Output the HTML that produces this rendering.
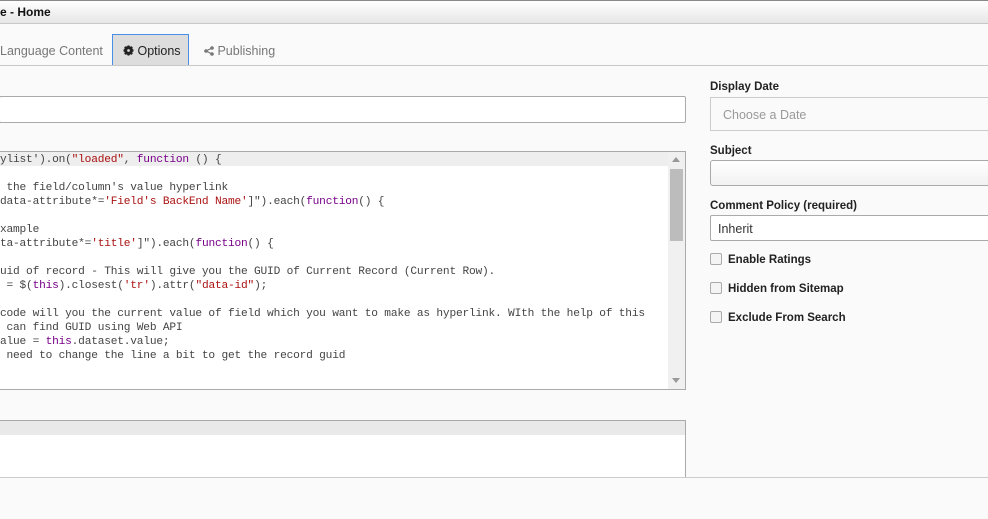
<!DOCTYPE html>
<html><head><meta charset="utf-8"><style>
*{box-sizing:border-box;margin:0;padding:0}
body{width:988px;height:519px;overflow:hidden;background:#fafafa;font-family:"Liberation Sans",sans-serif;position:relative}
.abs{position:absolute}
.title{left:0;top:0;width:988px;height:24px;background:linear-gradient(#fff,#e6e6e6);border-top:1px solid #888;border-bottom:1px solid #c8c8c8;font-weight:bold;font-size:12px;line-height:22px;color:#111}
.tab{font-size:12.5px;color:#777;top:34px;height:32px;line-height:32px}
.code{left:-1px;top:151px;width:687px;height:239px;background:#fff;border:1px solid #aaa;font-family:"Liberation Mono",monospace;font-size:11.2px;color:#444}
.code div{height:14px;line-height:16px;white-space:pre;letter-spacing:-0.2px}
.k{color:#708}.s{color:#a11}
.lbl{font-size:11.5px;font-weight:bold;color:#222;left:710px}
.cb{left:710px;width:12px;height:12px;border:1px solid #aaa;border-radius:2px;background:#f4f4f4}
</style></head><body>
<div class="abs title">e - Home</div>
<div class="abs tab" style="left:0;top:35px">Language Content</div>
<div class="abs tab" style="left:112px;width:77px;background:#ddd;border:1px solid #4a8fe7;border-bottom:none;color:#222;padding-left:10px;line-height:33px">
<svg width="11" height="11" viewBox="0 0 12 12" style="vertical-align:-1px"><circle cx="6" cy="6" r="3.6" fill="none" stroke="#222" stroke-width="2.6"/><g stroke="#222" stroke-width="2.2"><line x1="6" y1="0.5" x2="6" y2="11.5"/><line x1="0.5" y1="6" x2="11.5" y2="6"/><line x1="2" y1="2" x2="10" y2="10"/><line x1="10" y1="2" x2="2" y2="10"/></g><circle cx="6" cy="6" r="1.5" fill="#ddd"/></svg> Options</div>
<div class="abs tab" style="left:204px;top:35px"><svg width="10" height="10" viewBox="0 0 10 10" style="vertical-align:-1px"><circle cx="8" cy="2" r="1.8" fill="#777"/><circle cx="2" cy="5" r="1.8" fill="#777"/><circle cx="8" cy="8" r="1.8" fill="#777"/><path d="M8 2L2 5L8 8" stroke="#777" stroke-width="1.2" fill="none"/></svg> Publishing</div>
<div class="abs" style="left:0;top:65px;width:988px;height:1px;background:#c8c8c8"></div>
<div class="abs" style="left:-1px;top:96px;width:687px;height:27px;background:#fff;border:1px solid #aaa;border-radius:2px"></div>
<div class="abs code">
<div style="background:#eee"><span>ylist').on(</span><span class="s">"loaded"</span>, <span class="k">function</span> () {</div>
<div> </div>
<div> the field/column's value hyperlink</div>
<div>data-attribute*=<span class="s">'Field's BackEnd Name'</span>]").each(<span class="k">function</span>() {</div>
<div> </div>
<div>xample</div>
<div>ta-attribute*=<span class="s">'title'</span>]").each(<span class="k">function</span>() {</div>
<div> </div>
<div>uid of record - This will give you the GUID of Current Record (Current Row).</div>
<div> = $(<span class="k">this</span>).closest(<span class="s">'tr'</span>).attr(<span class="s">"data-id"</span>);</div>
<div> </div>
<div>code will you the current value of field which you want to make as hyperlink. WIth the help of this</div>
<div> can find GUID using Web API</div>
<div>alue = <span class="k">this</span>.dataset.value;</div>
<div> need to change the line a bit to get the record guid</div>
<div class="abs" style="left:668px;top:0;width:17px;height:237px;background:#f0f0f0"></div>
<div class="abs" style="left:670px;top:17px;width:13px;height:72px;background:#bcbcbc"></div>
<div class="abs" style="left:672px;top:5px;width:0;height:0;border:4px solid transparent;border-bottom:5px solid #999;border-top:0"></div>
<div class="abs" style="left:672px;top:226px;width:0;height:0;border:4px solid transparent;border-top:5px solid #999;border-bottom:0"></div>
</div>
<div class="abs" style="left:-1px;top:420px;width:687px;height:58px;background:#fff;border:1px solid #aaa;border-bottom:none"><div style="height:14px;background:#e9e9e9"></div></div>
<div class="abs" style="left:0;top:477px;width:988px;height:1px;background:#ccc"></div>
<div class="abs lbl" style="top:81px">Display Date</div>
<div class="abs" style="left:710px;top:97px;width:290px;height:34px;border:1px solid #ccc;background:#fafafa;font-size:12.5px;color:#999;line-height:34px;padding-left:12px">Choose a Date</div>
<div class="abs lbl" style="top:145px">Subject</div>
<div class="abs" style="left:710px;top:160px;width:290px;height:26px;border:1px solid #aaa;border-radius:3px;background:linear-gradient(#fff,#f2f2f2)"></div>
<div class="abs lbl" style="top:200px">Comment Policy (required)</div>
<div class="abs" style="left:710px;top:215px;width:290px;height:26px;border:1px solid #aaa;border-radius:2px;background:#fff;font-size:12.5px;color:#333;line-height:26px;padding-left:7px">Inherit</div>
<div class="abs cb" style="top:253px"></div><div class="abs lbl" style="left:728px;top:254px">Enable Ratings</div>
<div class="abs cb" style="top:282px"></div><div class="abs lbl" style="left:728px;top:283px">Hidden from Sitemap</div>
<div class="abs cb" style="top:311px"></div><div class="abs lbl" style="left:728px;top:312px">Exclude From Search</div>
</body></html>
